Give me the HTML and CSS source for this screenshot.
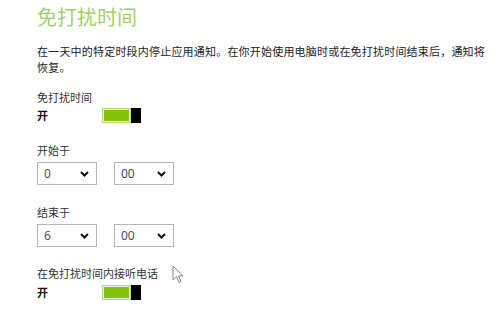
FILE: index.html
```html
<!DOCTYPE html>
<html lang="zh">
<head>
<meta charset="utf-8">
<link rel="stylesheet" href="styles.css">
</head>
<body>
<div class="page">
  <h1 class="title">免打扰时间</h1>
  <p class="desc">在一天中的特定时段内停止应用通知。在你开始使用电脑时或在免打扰时间结束后，通知将恢复。</p>

  <div class="label l-first">免打扰时间</div>
  <div class="toggle-row">
    <span class="state">开</span>
    <span class="toggle"><span class="fill"></span><span class="thumb"></span></span>
  </div>

  <div class="label l-start">开始于</div>
  <div class="selects">
    <div class="select"><span>0</span><svg class="chev" width="9" height="6" viewBox="0 0 9 6"><polyline points="1,1 4.5,4.5 8,1" fill="none" stroke="#111" stroke-width="2"/></svg></div>
    <div class="select"><span>00</span><svg class="chev" width="9" height="6" viewBox="0 0 9 6"><polyline points="1,1 4.5,4.5 8,1" fill="none" stroke="#111" stroke-width="2"/></svg></div>
  </div>

  <div class="label l-end">结束于</div>
  <div class="selects">
    <div class="select"><span>6</span><svg class="chev" width="9" height="6" viewBox="0 0 9 6"><polyline points="1,1 4.5,4.5 8,1" fill="none" stroke="#111" stroke-width="2"/></svg></div>
    <div class="select"><span>00</span><svg class="chev" width="9" height="6" viewBox="0 0 9 6"><polyline points="1,1 4.5,4.5 8,1" fill="none" stroke="#111" stroke-width="2"/></svg></div>
  </div>

  <div class="label l-calls">在免打扰时间内接听电话</div>
  <div class="toggle-row tr-last">
    <span class="state">开</span>
    <span class="toggle"><span class="fill"></span><span class="thumb"></span></span>
  </div>
</div>
<svg class="cursor" width="12" height="19" viewBox="0 0 12 19"><path d="M1 1 L1 15 L4.5 11.5 L7 17.5 L9 16.5 L6.5 10.8 L11 10.8 Z" fill="#fff" stroke="#888" stroke-width="1"/></svg>
</body>
</html>
```
FILE: styles.css
```css
html, body {
  margin: 0;
  padding: 0;
  background: #fff;
}
body {
  font-family: "Noto Sans CJK SC", "Noto Sans", sans-serif;
  color: #222;
  position: relative;
  width: 500px;
  height: 316px;
  overflow: hidden;
}
.page {
  padding: 5px 0 0 37px;
  display: flex;
  flex-direction: column;
  align-items: flex-start;
}
.title {
  margin: 0;
  font-size: 20px;
  line-height: 24px;
  font-weight: normal;
  color: #a2cf68;
}
.desc {
  margin: 14px 0 0 0;
  width: 455px;
  font-size: 11px;
  line-height: 16px;
  letter-spacing: 0.2px;
  color: #222;
}
.label {
  font-size: 11px;
  line-height: 16px;
  color: #333;
}
.l-first { margin-top: 14px; }
.l-start { margin-top: 17px; }
.l-end { margin-top: 19px; }
.l-calls { margin-top: 18px; }
.toggle-row {
  height: 20px;
  display: flex;
  align-items: center;
}
.tr-last { margin-top: 1px; }
.state {
  font-size: 11px;
  font-weight: bold;
  width: 65px;
  color: #111;
}
.toggle {
  display: flex;
  width: 39px;
  height: 15px;
}
.fill {
  flex: 1;
  background: #83c30a;
  border: 1px solid #b5d88a;
  box-shadow: inset 0 0 0 1px #e4f1d2;
}
.thumb {
  width: 10px;
  background: #000;
}
.selects {
  display: flex;
  gap: 17px;
  margin-top: 4px;
}
.select {
  box-sizing: border-box;
  width: 60px;
  height: 23px;
  border: 1px solid #b4b4b4;
  display: flex;
  align-items: center;
  justify-content: space-between;
  padding: 0 7px 0 6px;
  font-family: "Open Sans", "Noto Sans", sans-serif;
  font-size: 12px;
  color: #444;
}
.chev {
  display: block;
}
.cursor {
  position: absolute;
  left: 172px;
  top: 265px;
}
```
